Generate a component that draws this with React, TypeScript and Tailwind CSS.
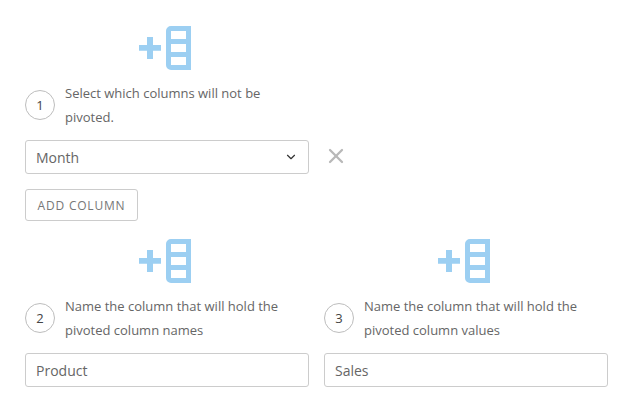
import { ChevronDown, X } from "lucide-react";

function PivotIcon() {
  return (
    <svg width="52" height="44" viewBox="0 0 52 44" className="block">
      <path d="M0 19h22v5.700H0zM8 11h6v22H8z" fill="#9ccff2" />
      <path
        fillRule="evenodd"
        d="M32 0h20v44H32a5 5 0 0 1-5-5V5a5 5 0 0 1 5-5zM32 5v8h15V5zM32 18v8h15v-8zM32 31v8h15v-8z"
        fill="#9ccff2"
      />
    </svg>
  );
}

function Step({ n, lines }: { n: number; lines: string[] }) {
  return (
    <div className="flex items-center w-[284px]">
      <div className="w-[30px] h-[30px] shrink-0 rounded-full border border-[#bdbdbd] pt-[1px] flex items-center justify-center text-[13px] text-[#444]">
        {n}
      </div>
      <div className="ml-[10px] text-[13px] leading-[24px] text-[#666] whitespace-nowrap">
        {lines.map((l) => (
          <div key={l}>{l}</div>
        ))}
      </div>
    </div>
  );
}

function Field({ value }: { value: string }) {
  return (
    <div className="w-[284px] h-[34px] rounded-[3px] border border-[#ccc] bg-white px-[10px] flex items-center text-[14px] text-[#666]">
      {value}
    </div>
  );
}

export default function App() {
  return (
    <div className="w-[631px] h-[402px] bg-white overflow-hidden pl-[25px] pt-[26px] font-['Open_Sans',sans-serif]">
      <div className="pl-[114px]">
        <PivotIcon />
      </div>
      <div className="mt-[11px]">
        <Step n={1} lines={["Select which columns will not be", "pivoted."]} />
      </div>
      <div className="mt-[11px] flex items-center">
        <div className="w-[284px] h-[34px] rounded-[3px] border border-[#ccc] bg-white pl-[10px] pr-[10px] flex items-center justify-between text-[14px] text-[#666]">
          Month
          <ChevronDown size={14} strokeWidth={2} className="text-[#333]" />
        </div>
        <X size={24} strokeWidth={2.25} className="ml-[15px] text-[#b8b8b8] -mt-[2px]" />
      </div>
      <button className="mt-[15px] block w-[113px] h-[32px] pt-[1px] rounded-[3px] border border-[#ccc] bg-white text-[12px] tracking-[0.8px] text-[#777]">
        ADD COLUMN
      </button>
      <div className="mt-[18px] flex gap-[15px]">
        <div className="w-[284px]">
          <div className="pl-[114px]">
            <PivotIcon />
          </div>
          <div className="mt-[11px]">
            <Step n={2} lines={["Name the column that will hold the", "pivoted column names"]} />
          </div>
          <div className="mt-[11px]">
            <Field value="Product" />
          </div>
        </div>
        <div className="w-[284px]">
          <div className="pl-[114px]">
            <PivotIcon />
          </div>
          <div className="mt-[11px]">
            <Step n={3} lines={["Name the column that will hold the", "pivoted column values"]} />
          </div>
          <div className="mt-[11px]">
            <Field value="Sales" />
          </div>
        </div>
      </div>
    </div>
  );
}
